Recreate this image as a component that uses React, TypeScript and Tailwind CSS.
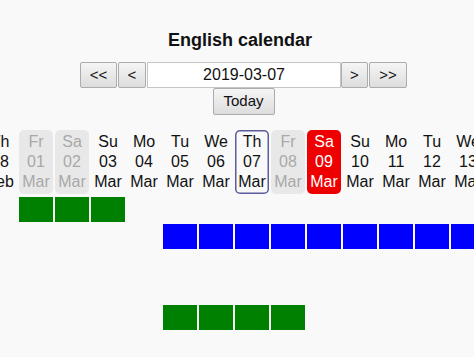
import React from "react";

interface Day {
  dow: string;
  date: string;
  month: string;
  off?: boolean;
  holiday?: boolean;
  selected?: boolean;
}

const days: Day[] = [
  { dow: "Th", date: "28", month: "Feb" },
  { dow: "Fr", date: "01", month: "Mar", off: true },
  { dow: "Sa", date: "02", month: "Mar", off: true },
  { dow: "Su", date: "03", month: "Mar" },
  { dow: "Mo", date: "04", month: "Mar" },
  { dow: "Tu", date: "05", month: "Mar" },
  { dow: "We", date: "06", month: "Mar" },
  { dow: "Th", date: "07", month: "Mar", selected: true },
  { dow: "Fr", date: "08", month: "Mar", off: true },
  { dow: "Sa", date: "09", month: "Mar", holiday: true },
  { dow: "Su", date: "10", month: "Mar" },
  { dow: "Mo", date: "11", month: "Mar" },
  { dow: "Tu", date: "12", month: "Mar" },
  { dow: "We", date: "13", month: "Mar" },
  { dow: "Th", date: "14", month: "Mar" },
];

// each row: [firstCol, lastCol, color] or null for an empty row
const eventRows: ([number, number, "green" | "blue"] | null)[] = [
  [1, 3, "green"],
  [5, 14, "blue"],
  null,
  null,
  [5, 8, "green"],
];

const btn =
  "h-[26px] border border-[#acacac] rounded-[2px] bg-gradient-to-b from-[#f5f5f5] to-[#dddddd] text-[15px] text-[#111] flex items-center justify-center";

const App = () => {
  return (
    <div className="w-[474px] h-[357px] overflow-hidden bg-[#f9f9f9] font-['Liberation_Sans',Arial,sans-serif] text-black">
      {/* header */}
      <div className="pt-[29px] flex flex-col items-center">
        <h1 className="pl-[6px] text-[18px] leading-[22px] font-bold text-[#111]">
          English calendar
        </h1>
        <div className="mt-[11px] pl-[13px] flex items-center">
          <button className={`${btn} w-[37px]`}>&lt;&lt;</button>
          <button className={`${btn} w-[28px] ml-[1px]`}>&lt;</button>
          <input
            readOnly
            value="2019-03-07"
            className="ml-[1px] w-[194px] h-[26px] border border-[#c6c6c6] bg-white text-center text-[16px] text-[#111] outline-none"
          />
          <button className={`${btn} w-[27px]`}>&gt;</button>
          <button className={`${btn} w-[38px] ml-[1px]`}>&gt;&gt;</button>
        </div>
        <div className="pl-[13px]">
          <button className={`${btn} w-[62px] h-[27px]`}>Today</button>
        </div>
      </div>

      {/* day strip */}
      <div className="mt-[15px] -ml-[18px] w-max">
        <div className="grid grid-cols-[repeat(15,36px)]">
          {days.map((d, i) => {
            let tone = "text-[#111]";
            if (d.off) tone = "bg-[#e8e8e8] text-[#a9a9a9]";
            if (d.holiday) tone = "bg-[#ee0000] text-white";
            if (d.selected) tone = "text-[#111] ring-[1.5px] ring-inset ring-[#5b5b9e]";
            return (
              <div
                key={i}
                className={`mx-[1px] h-[64px] py-[2px] flex flex-col items-center rounded-[5px] text-[16px] leading-[20px] ${tone}`}
              >
                <span>{d.dow}</span>
                <span>{d.date}</span>
                <span>{d.month}</span>
              </div>
            );
          })}
        </div>

        {/* event rows */}
        <div className="mt-[2px]">
          {eventRows.map((row, r) => (
            <div key={r} className="grid grid-cols-[repeat(15,36px)] h-[27px]">
              {days.map((_, c) => {
                const on = row && c >= row[0] && c <= row[1];
                const color = row && row[2] === "blue" ? "bg-[#0000ff]" : "bg-[#008000]";
                return (
                  <div key={c} className="px-[1px] pt-[1px]">
                    {on && <div className={`h-[25px] ${color}`} />}
                  </div>
                );
              })}
            </div>
          ))}
        </div>
      </div>
    </div>
  );
};

export default App;
